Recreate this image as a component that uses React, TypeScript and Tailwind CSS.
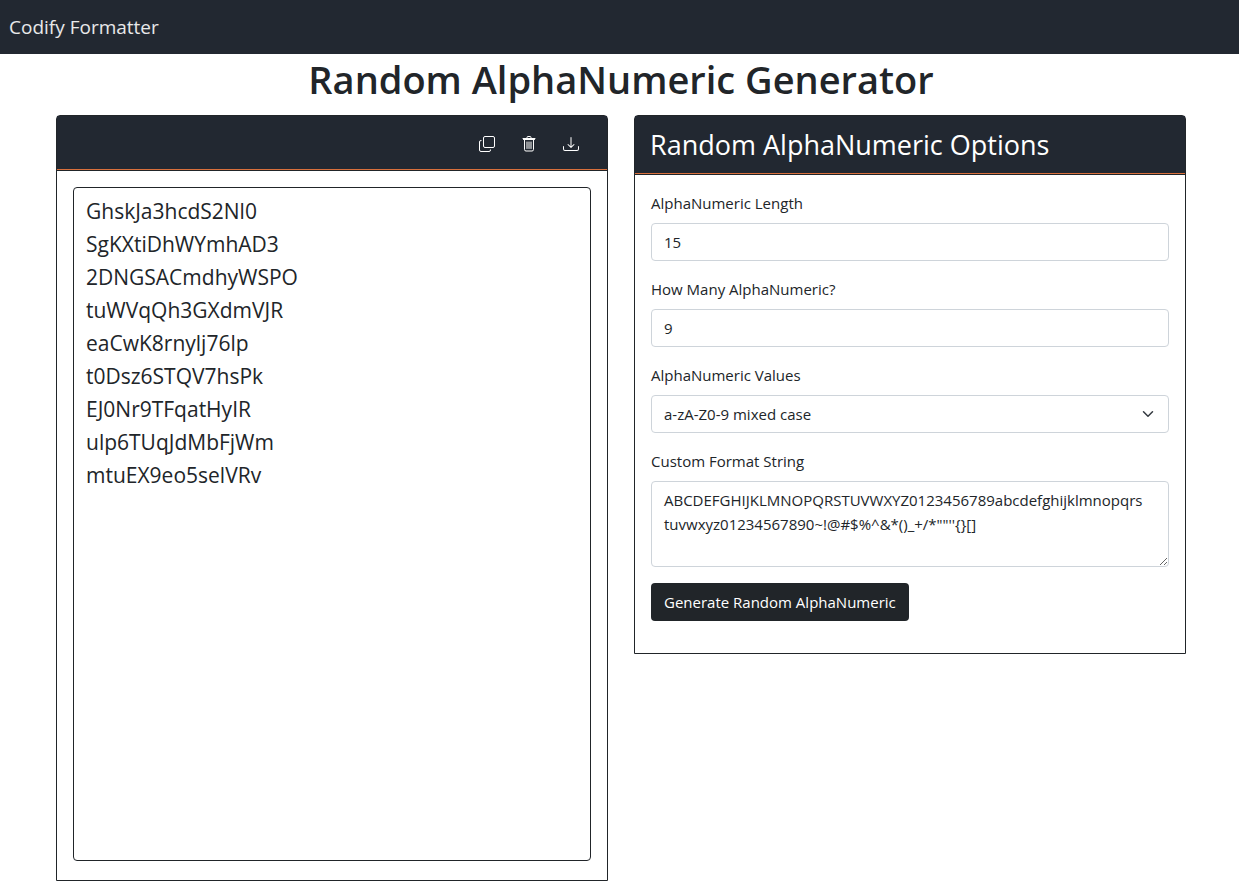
import { useState } from "react"
import { BsDownload } from "react-icons/bs"

const CHARSETS = ["a-zA-Z0-9 mixed case", "a-z0-9 lower case", "A-Z0-9 upper case", "Custom format string"]

const POOLS = [
  "abcdefghijklmnopqrstuvwxyzABCDEFGHIJKLMNOPQRSTUVWXYZ0123456789",
  "abcdefghijklmnopqrstuvwxyz0123456789",
  "ABCDEFGHIJKLMNOPQRSTUVWXYZ0123456789",
]

const INITIAL = [
  "GhskJa3hcdS2Nl0",
  "SgKXtiDhWYmhAD3",
  "2DNGSACmdhyWSPO",
  "tuWVqQh3GXdmVJR",
  "eaCwK8rnylj76lp",
  "t0Dsz6STQV7hsPk",
  "EJ0Nr9TFqatHyIR",
  "ulp6TUqJdMbFjWm",
  "mtuEX9eo5selVRv",
].join("\n")

const field = "block w-full rounded border border-[#ced4da] bg-white text-[15px] leading-6"

export default function App() {
  const [output, setOutput] = useState(INITIAL)
  const [length, setLength] = useState("15")
  const [count, setCount] = useState("9")
  const [charset, setCharset] = useState(CHARSETS[0])
  const [custom, setCustom] = useState(
    "ABCDEFGHIJKLMNOPQRSTUVWXYZ0123456789abcdefghijklmnopqrstuvwxyz01234567890~!@#$%^&*()_+/*\"\"''{}[]",
  )

  const generate = () => {
    const pool = POOLS[CHARSETS.indexOf(charset)] ?? custom
    const line = () =>
      Array.from({ length: Number(length) }, () => pool[Math.floor(Math.random() * pool.length)]).join("")
    setOutput(Array.from({ length: Number(count) }, line).join("\n"))
  }

  const download = () => {
    const a = document.createElement("a")
    a.href = URL.createObjectURL(new Blob([output], { type: "text/plain" }))
    a.download = "alphanumeric.txt"
    a.click()
  }

  return (
    <div className="min-h-screen bg-white font-['Open_Sans',sans-serif] text-[#212529]">
      <nav className="flex h-[54px] items-center bg-[#222831] px-[9px]">
        <a href="#" className="text-[19px] leading-[30px] text-white/90">Codify Formatter</a>
      </nav>

      <main className="pr-[53px] pl-14">
        <h1 className="pt-px pb-3 text-center text-[38px] leading-[48px] font-semibold">
          Random AlphaNumeric Generator
        </h1>

        <div className="grid grid-cols-2 items-start gap-[26px]">
          <section className="rounded-t border border-[#212529]">
            <header className="flex h-[54px] items-center justify-end gap-[26px] border-b border-b-[#d9703c] bg-[#222831] px-7 pt-[2px] text-white">
              <button aria-label="Copy" onClick={() => navigator.clipboard.writeText(output)}>
                <CopyIcon />
              </button>
              <button aria-label="Clear" onClick={() => setOutput("")}>
                <TrashIcon />
              </button>
              <button aria-label="Download" onClick={download}>
                <BsDownload size={16} />
              </button>
            </header>
            <div className="border-t border-[#212529] px-4 pt-4 pb-[19px]">
              <textarea
                aria-label="Output"
                value={output}
                onChange={(e) => setOutput(e.target.value)}
                className="block h-[674px] w-full resize-none rounded border border-[#212529] px-3 py-[7px] text-[21px] leading-[33px] outline-none"
              />
            </div>
          </section>

          <section className="rounded-t border border-[#212529]">
            <header className="flex h-[58px] items-center border-b border-b-[#d9703c] bg-[#222831] px-[15px]">
              <h2 className="text-[27px] leading-[34px] text-white">Random AlphaNumeric Options</h2>
            </header>
            <div className="flex flex-col gap-4 border-t border-[#212529] px-4 pt-4 pb-8">
              <Field id="length" label="AlphaNumeric Length">
                <input id="length" value={length} onChange={(e) => setLength(e.target.value)} className={`${field} h-[38px] px-3`} />
              </Field>
              <Field id="count" label="How Many AlphaNumeric?">
                <input id="count" value={count} onChange={(e) => setCount(e.target.value)} className={`${field} h-[38px] px-3`} />
              </Field>
              <Field id="charset" label="AlphaNumeric Values">
                <div className="relative">
                  <select
                    id="charset"
                    value={charset}
                    onChange={(e) => setCharset(e.target.value)}
                    className={`${field} h-[38px] appearance-none pr-9 pl-3`}
                  >
                    {CHARSETS.map((c) => (
                      <option key={c}>{c}</option>
                    ))}
                  </select>
                  <svg
                    viewBox="0 0 16 16"
                    className="pointer-events-none absolute top-[13px] right-[13px] h-3 w-4"
                    fill="none"
                    stroke="#343a40"
                    strokeWidth="2"
                    strokeLinecap="round"
                    strokeLinejoin="round"
                  >
                    <path d="m2 5 6 6 6-6" />
                  </svg>
                </div>
              </Field>
              <Field id="custom" label="Custom Format String">
                <textarea
                  id="custom"
                  value={custom}
                  onChange={(e) => setCustom(e.target.value)}
                  className={`${field} h-[86px] py-[6px] pr-6 pl-3 break-all`}
                />
              </Field>
              <button
                onClick={generate}
                className="h-[38px] self-start rounded bg-[#212529] px-[13px] text-[15px] leading-6 text-white"
              >
                Generate Random AlphaNumeric
              </button>
            </div>
          </section>
        </div>
      </main>
    </div>
  )
}

function Field({ id, label, children }: { id: string; label: string; children: React.ReactNode }) {
  return (
    <div>
      <label htmlFor={id} className="mb-2 block text-[15px] leading-6">
        {label}
      </label>
      {children}
    </div>
  )
}

/* ---------------- ICONS ---------------- */

function CopyIcon() {
  return (
    <svg width="16" height="16" viewBox="0 0 16 16" fill="none" stroke="currentColor">
      <rect x="4.5" y="0.5" width="11" height="11" rx="1.5" />
      <path d="M2.5 4.5H2A1.5 1.5 0 0 0 .5 6v8A1.5 1.5 0 0 0 2 15.5h8a1.5 1.5 0 0 0 1.5-1.5v-.5" />
    </svg>
  )
}

function TrashIcon() {
  return (
    <svg width="16" height="16" viewBox="0 0 16 16" fill="none" stroke="currentColor" strokeLinecap="round">
      <path d="M2 2.5h12M6 2V1.5a1 1 0 0 1 1-1h2a1 1 0 0 1 1 1V2M2.5 3.5h11" />
      <path d="M3.5 4v9.5A1.5 1.5 0 0 0 5 15h6a1.5 1.5 0 0 0 1.5-1.5V4M6 6v6.5M8 6v6.5M10 6v6.5" />
    </svg>
  )
}
